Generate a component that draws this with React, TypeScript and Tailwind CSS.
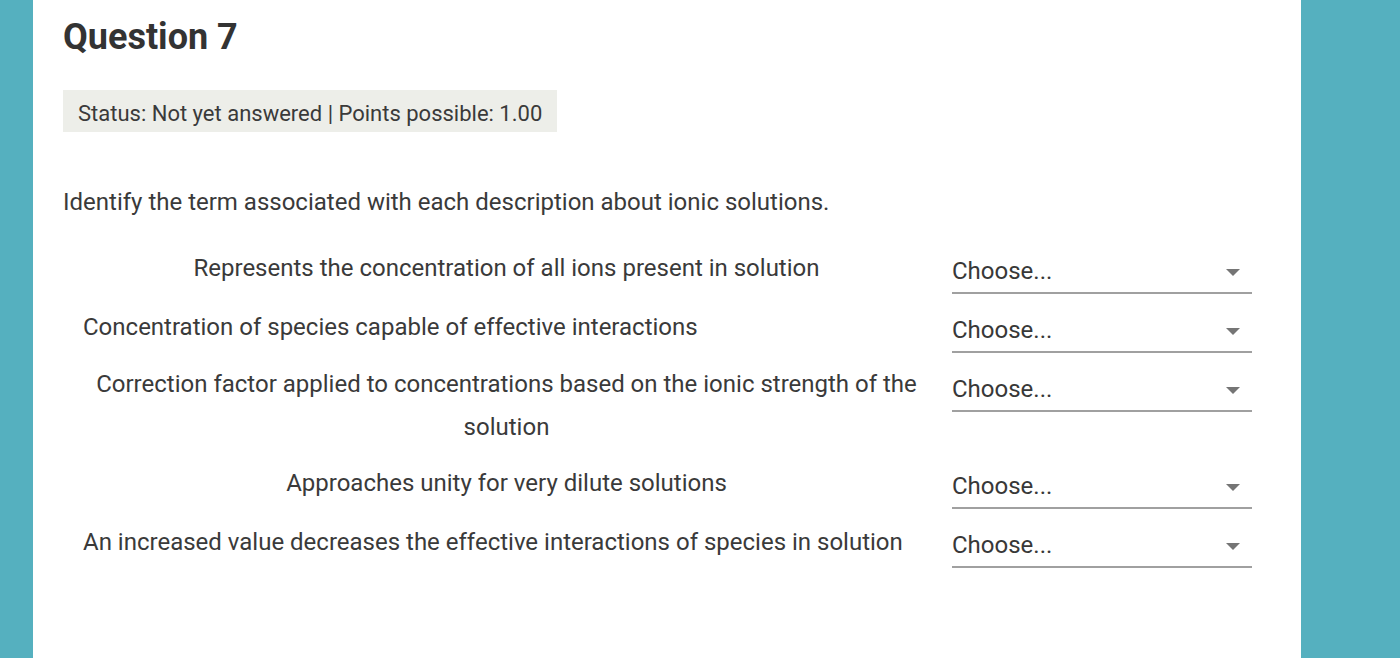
import React from "react";

const rows: { text: string; align: "center" | "left" }[] = [
  { text: "Represents the concentration of all ions present in solution", align: "center" },
  { text: "Concentration of species capable of effective interactions", align: "left" },
  { text: "Correction factor applied to concentrations based on the ionic strength of the solution", align: "center" },
  { text: "Approaches unity for very dilute solutions", align: "center" },
  { text: "An increased value decreases the effective interactions of species in solution", align: "left" },
];

function Select() {
  return (
    <div className="w-[300px] h-[59px] shrink-0 self-start">
      <div className="mt-[14px] pb-[3px] border-b-2 border-[#a0a0a0] flex items-center justify-between pr-[12px]">
        <span className="text-[24px] leading-[36px] text-[#383838]">Choose...</span>
        <svg width="14" height="7" viewBox="0 0 14 7" className="mt-[3px]">
          <polygon points="0,0 14,0 7,7" fill="#757575" />
        </svg>
      </div>
    </div>
  );
}

export default function App() {
  return (
    <div
      className="w-[1400px] h-[658px] bg-[#55b0bf] pl-[33px] overflow-hidden"
      style={{ fontFamily: "Roboto, 'Noto Sans', sans-serif" }}
    >
      <div className="w-[1268px] h-[658px] bg-white pl-[30px] pt-[16px] text-[#333333]">
        <h1 className="text-[36px] leading-[43px] font-bold text-[#333333]">Question 7</h1>
        <div className="mt-[31px] inline-block bg-[#edeee9] px-[15px] pt-[7px] pb-[2px] text-[22px] leading-[33px] text-[#3a3a3a]">
          Status: Not yet answered | Points possible: 1.00
        </div>
        <p className="mt-[49px] text-[24px] leading-[43px] text-[#3a3a3a]">
          Identify the term associated with each description about ionic solutions.
        </p>
        <div className="mt-[15px] flex flex-col">
          {rows.map((r, i) => (
            <div key={i} className="flex items-stretch">
              <div
                className={
                  "w-[889px] shrink-0 pl-5 pr-[22px] py-[5.5px] flex items-center text-[24px] leading-[43px] text-[#3a3a3a] " +
                  (r.align === "center" ? "justify-center text-center" : "justify-start text-left")
                }
              >
                <span>{r.text}</span>
              </div>
              <Select />
            </div>
          ))}
        </div>
      </div>
    </div>
  );
}
